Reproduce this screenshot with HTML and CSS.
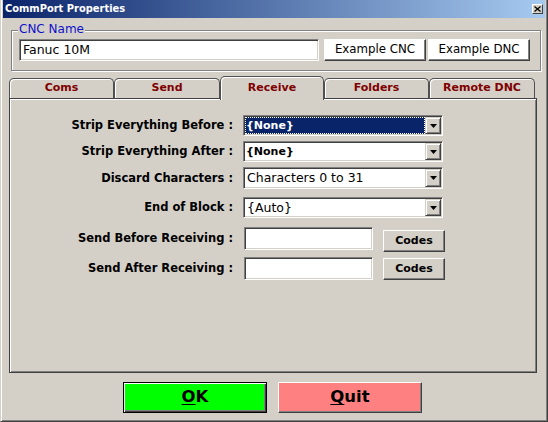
FILE: index.html
```html
<!DOCTYPE html>
<html>
<head>
<meta charset="utf-8">
<title>CommPort Properties</title>
<link rel="stylesheet" href="styles.css">
</head>
<body>
<div class="window">
  <div class="titlebar">
    <span class="title">CommPort Properties</span>
    <span class="close"><svg width="7" height="6" viewBox="0 0 7 6"><path d="M0.5 0.5L6.5 5.5M6.5 0.5L0.5 5.5" stroke="#000" stroke-width="1.3" fill="none"/></svg></span>
  </div>
  <div class="group">
    <span class="group-label">CNC Name</span>
    <div class="sunken name">Fanuc 10M</div>
    <div class="btn example first">Example CNC</div>
    <div class="btn example">Example DNC</div>
  </div>
  <div class="tabs">
    <div class="tab w105">Coms</div>
    <div class="tab w106">Send</div>
    <div class="tab w104 active">Receive</div>
    <div class="tab w105">Folders</div>
    <div class="tab w106">Remote DNC</div>
  </div>
  <div class="panel">
    <div class="row r26">
      <div class="label h21">Strip Everything Before :</div>
      <div class="sunken combo h21"><div class="value sel">{None}</div><div class="arrow"><svg width="7" height="4" viewBox="0 0 7 4"><path d="M0 0H7L3.5 4Z" fill="#000"/></svg></div></div>
    </div>
    <div class="row r26">
      <div class="label h21">Strip Everything After :</div>
      <div class="sunken combo h21"><div class="value b">{None}</div><div class="arrow"><svg width="7" height="4" viewBox="0 0 7 4"><path d="M0 0H7L3.5 4Z" fill="#000"/></svg></div></div>
    </div>
    <div class="row r30">
      <div class="label h22">Discard Characters :</div>
      <div class="sunken combo h22"><div class="value">Characters 0 to 31</div><div class="arrow"><svg width="7" height="4" viewBox="0 0 7 4"><path d="M0 0H7L3.5 4Z" fill="#000"/></svg></div></div>
    </div>
    <div class="row r30">
      <div class="label h21">End of Block :</div>
      <div class="sunken combo h21"><div class="value">{Auto}</div><div class="arrow"><svg width="7" height="4" viewBox="0 0 7 4"><path d="M0 0H7L3.5 4Z" fill="#000"/></svg></div></div>
    </div>
    <div class="row r30">
      <div class="label h23">Send Before Receiving :</div>
      <div class="sunken field"></div>
      <div class="btn codes">Codes</div>
    </div>
    <div class="row r30">
      <div class="label h23">Send After Receiving :</div>
      <div class="sunken field"></div>
      <div class="btn codes c2">Codes</div>
    </div>
  </div>
  <div class="actions">
    <div class="big ok"><u>O</u>K</div>
    <div class="big quit"><u>Q</u>uit</div>
  </div>
</div>
</body>
</html>
```
FILE: styles.css
```css
* { box-sizing: border-box; }
html, body { margin: 0; padding: 0; background: #d4d0c8; }
body { width: 548px; height: 422px; overflow: hidden; font-family: "DejaVu Sans", sans-serif; color: #000; }

.window {
  width: 548px; height: 422px;
  background: #d4d0c8;
  border-left: 1px solid #d4d0c8;
  border-right: 1px solid #404040;
  border-bottom: 1px solid #404040;
  box-shadow: inset 1px 0 #fff, inset -1px -1px #808080;
  padding: 0 2px 2px 2px;
  display: flex; flex-direction: column;
}

.titlebar {
  height: 18px; flex: none;
  display: flex; align-items: center; justify-content: space-between;
  padding: 0 2px;
  background: linear-gradient(to right, #0a246a, #a6caf0);
}
.title { color: #fff; font-family: "DejaVu Sans Condensed", "DejaVu Sans", sans-serif; font-weight: bold; font-size: 11px; line-height: 18px; }
.close {
  width: 11px; height: 10px;
  background: #d4d0c8;
  border: 1px solid; border-color: #fff #404040 #404040 #fff;
  display: flex; align-items: center; justify-content: center;
}
.close svg { display: block; }

.group {
  position: relative;
  margin: 12px 4px 0 8px;
  border: 1px solid #808080;
  box-shadow: inset 1px 1px #fff, 1px 1px #fff;
  padding: 8px 10px 9px 7px;
  display: flex; flex: none;
}
.group-label {
  position: absolute; top: -9px; left: 6px;
  background: #d4d0c8; padding: 0 1px;
  color: #1010c8; font-size: 12px; line-height: 14px;
}

.sunken {
  background: #fff;
  border: 1px solid; border-color: #808080 #fff #fff #808080;
  box-shadow: inset 1px 1px #404040, inset -1px -1px #d4d0c8;
}
.name { width: 300px; height: 22px; padding-left: 3px; font-size: 12.5px; line-height: 20px; }

.btn {
  background: #d4d0c8;
  border: 1px solid; border-color: #fff #404040 #404040 #fff;
  box-shadow: inset -1px -1px #808080;
  text-align: center;
}
.example { width: 102px; height: 22px; margin-left: 2px; background: #fff; font-size: 11.8px; line-height: 19px; }
.example.first { margin-left: 5px; }

.tabs {
  display: flex; align-items: flex-end; flex: none;
  height: 22px; margin: 5px 0 0 6px;
  position: relative; z-index: 1;
}
.tab {
  height: 20px;
  background: #d4d0c8;
  border: 1px solid #505050; border-bottom: none;
  border-radius: 5px 5px 0 0;
  box-shadow: inset 1px 1px #fff;
  color: #800000; font-weight: bold; font-size: 11px; line-height: 18px;
  text-align: center;
}
.w104 { width: 104px; }
.w105 { width: 105px; }
.w106 { width: 106px; }
.tab.active { height: 24px; margin-bottom: -2px; line-height: 21px; }

.panel {
  flex: none;
  height: 275px;
  margin: 0 8px 0 6px;
  border: 1px solid #404040;
  box-shadow: inset 1px 1px #fff, inset -1px -1px #808080;
  padding-top: 16px;
}
.row { display: flex; align-items: flex-start; }
.r26 { height: 26px; }
.r30 { height: 30px; }
.label {
  width: 223px; margin-right: 10px;
  text-align: right; font-weight: bold; font-size: 11.5px; white-space: nowrap;
}
.h21 { height: 21px; line-height: 21px; }
.h22 { height: 22px; line-height: 22px; }
.h23 { height: 23px; line-height: 23px; }

.combo { width: 200px; padding: 1px; display: flex; }
.combo .value { flex: 1; padding-left: 2px; font-size: 12.5px; line-height: 17px; white-space: nowrap; overflow: hidden; }
.combo .value.b { font-weight: bold; font-size: 11px; padding-left: 1px; }
.combo .value.sel {
  background: #0a246a; color: #fff; font-weight: bold; font-size: 11px; padding-left: 1px;
  outline: 1px dotted #fff; outline-offset: -1px;
}
.combo .arrow {
  width: 16px; flex: none;
  background: #d4d0c8;
  border: 1px solid; border-color: #d4d0c8 #404040 #404040 #d4d0c8;
  box-shadow: inset 1px 1px #fff, inset -1px -1px #808080;
  display: flex; align-items: center; justify-content: center;
}
.combo .arrow svg { display: block; }

.field { width: 129px; height: 23px; margin-left: 1px; }
.codes { width: 62px; height: 22px; margin: 3px 0 0 10px; font-weight: bold; font-size: 11px; line-height: 19px; }
.codes.c2 { margin-top: 1px; }

.actions {
  display: flex; justify-content: center; gap: 11px;
  margin-top: 9px; padding-right: 3px;
}
.big {
  width: 144px; height: 31px;
  text-align: center; font-weight: bold; font-size: 16.5px; line-height: 28px;
}
.big u { text-decoration-thickness: 1px; text-underline-offset: 2px; }
.ok {
  background: #00ff00;
  border: 1px solid #000;
  box-shadow: inset 1px 1px #fff, inset -1px -1px #404040, inset -2px -2px #808080;
}
.quit {
  background: #ff8080;
  border: 1px solid; border-color: #fff #404040 #404040 #fff;
  box-shadow: inset -1px -1px #808080;
}
```
